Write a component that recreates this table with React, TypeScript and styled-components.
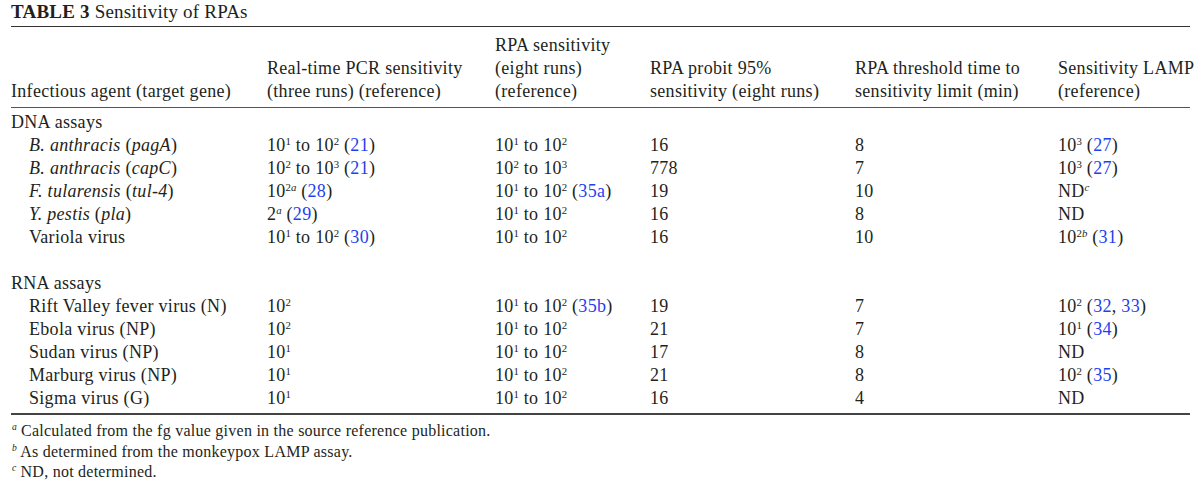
import React from 'react'
import { styled, createGlobalStyle } from 'styled-components'

const Global = createGlobalStyle`
  body {
    margin: 0;
    background: #fff;
    color: #231f20;
    font-family: "Liberation Serif", "Times New Roman", serif;
  }
`

const Page = styled.div`
  width: 1179px;
  padding: 2px 0 0 11px;
`

const TitleBar = styled.div`
  display: flex;
  align-items: baseline;
  gap: 5px;
  height: 20px;
  padding-bottom: 4px;
  border-bottom: 1.5px solid #333;
`

const TitleLabel = styled.span`
  font-size: 19px;
  line-height: 20px;
  font-weight: 700;
  letter-spacing: 0.2px;
`

const TitleText = styled.span`
  font-size: 19px;
  line-height: 20px;
  letter-spacing: 0.2px;
`

const Table = styled.table`
  width: 100%;
  table-layout: fixed;
  border-collapse: collapse;
  font-size: 18px;
  letter-spacing: 0.3px;
  line-height: 23px;
  border-bottom: 2.5px solid #444;

  tbody tr:last-child td {
    padding-bottom: 3px;
  }
`

const Th = styled.th<{ $w: number }>`
  width: ${(p) => p.$w}px;
  text-align: left;
  font-weight: 400;
  vertical-align: bottom;
  padding: 7px 0 4px;
  border-bottom: 1.5px solid #555;
  white-space: nowrap;
`

const Td = styled.td<{ $indent?: boolean; $top?: boolean }>`
  padding: ${(p) => (p.$top ? '3px' : '0')} 0 0 ${(p) => (p.$indent ? '18px' : '0')};
  height: 23px;
  vertical-align: middle;
  white-space: nowrap;
`

const Sup = styled.sup<{ $it?: boolean }>`
  font-size: 0.6em;
  line-height: 0;
  vertical-align: 0.6em;
  letter-spacing: 0;
  font-style: ${(p) => (p.$it ? 'italic' : 'normal')};
`

const Ref = styled.span`
  color: #1f3ff0;
`

const Notes = styled.div`
  font-size: 16px;
  letter-spacing: 0.25px;
  line-height: 20.5px;
  padding-top: 6px;
`

const Note = styled.div`
  padding-left: 1px;
`

const P = ({ e }: { e: string }) => <>10<Sup>{e}</Sup></>
const R = ({ n }: { n: React.ReactNode }) => <>(<Ref>{n}</Ref>)</>
const Range = ({ a, b }: { a: string; b: string }) => <><P e={a} /> to <P e={b} /></>

type Row = { agent: React.ReactNode; pcr: React.ReactNode; rpa: React.ReactNode; probit: string; time: string; lamp: React.ReactNode }

const dna: Row[] = [
  { agent: <><i>B. anthracis</i> (<i>pagA</i>)</>, pcr: <><Range a="1" b="2" /> <R n="21" /></>, rpa: <Range a="1" b="2" />, probit: '16', time: '8', lamp: <><P e="3" /> <R n="27" /></> },
  { agent: <><i>B. anthracis</i> (<i>capC</i>)</>, pcr: <><Range a="2" b="3" /> <R n="21" /></>, rpa: <Range a="2" b="3" />, probit: '778', time: '7', lamp: <><P e="3" /> <R n="27" /></> },
  { agent: <><i>F. tularensis</i> (<i>tul-4</i>)</>, pcr: <>10<Sup>2<i>a</i></Sup> <R n="28" /></>, rpa: <><Range a="1" b="2" /> <R n="35a" /></>, probit: '19', time: '10', lamp: <>ND<Sup $it>c</Sup></> },
  { agent: <><i>Y. pestis</i> (<i>pla</i>)</>, pcr: <>2<Sup $it>a</Sup> <R n="29" /></>, rpa: <Range a="1" b="2" />, probit: '16', time: '8', lamp: 'ND' },
  { agent: 'Variola virus', pcr: <><Range a="1" b="2" /> <R n="30" /></>, rpa: <Range a="1" b="2" />, probit: '16', time: '10', lamp: <>10<Sup>2<i>b</i></Sup> <R n="31" /></> },
]

const rna: Row[] = [
  { agent: 'Rift Valley fever virus (N)', pcr: <P e="2" />, rpa: <><Range a="1" b="2" /> <R n="35b" /></>, probit: '19', time: '7', lamp: <><P e="2" /> (<Ref>32</Ref>, <Ref>33</Ref>)</> },
  { agent: 'Ebola virus (NP)', pcr: <P e="2" />, rpa: <Range a="1" b="2" />, probit: '21', time: '7', lamp: <><P e="1" /> <R n="34" /></> },
  { agent: 'Sudan virus (NP)', pcr: <P e="1" />, rpa: <Range a="1" b="2" />, probit: '17', time: '8', lamp: 'ND' },
  { agent: 'Marburg virus (NP)', pcr: <P e="1" />, rpa: <Range a="1" b="2" />, probit: '21', time: '8', lamp: <><P e="2" /> <R n="35" /></> },
  { agent: 'Sigma virus (G)', pcr: <P e="1" />, rpa: <Range a="1" b="2" />, probit: '16', time: '4', lamp: 'ND' },
]

const DataRow = ({ r }: { r: Row }) => (
  <tr>
    <Td $indent>{r.agent}</Td>
    <Td>{r.pcr}</Td>
    <Td>{r.rpa}</Td>
    <Td>{r.probit}</Td>
    <Td>{r.time}</Td>
    <Td>{r.lamp}</Td>
  </tr>
)

export default function App() {
  return (
    <Page>
      <Global />
      <TitleBar>
        <TitleLabel>TABLE 3</TitleLabel>
        <TitleText>Sensitivity of RPAs</TitleText>
      </TitleBar>
      <Table>
        <thead>
          <tr>
            <Th $w={256}>Infectious agent (target gene)</Th>
            <Th $w={228}>Real-time PCR sensitivity<br />(three runs) (reference)</Th>
            <Th $w={155}>RPA sensitivity<br />(eight runs)<br />(reference)</Th>
            <Th $w={205}>RPA probit 95%<br />sensitivity (eight runs)</Th>
            <Th $w={203}>RPA threshold time to<br />sensitivity limit (min)</Th>
            <Th $w={132}>Sensitivity LAMP<br />(reference)</Th>
          </tr>
        </thead>
        <tbody>
          <tr><Td $top colSpan={6}>DNA assays</Td></tr>
          {dna.map((r, i) => <DataRow key={i} r={r} />)}
          <tr><Td colSpan={6} /></tr>
          <tr><Td colSpan={6}>RNA assays</Td></tr>
          {rna.map((r, i) => <DataRow key={i} r={r} />)}
        </tbody>
      </Table>
      <Notes>
        <Note><Sup $it>a</Sup> Calculated from the fg value given in the source reference publication.</Note>
        <Note><Sup $it>b</Sup> As determined from the monkeypox LAMP assay.</Note>
        <Note><Sup $it>c</Sup> ND, not determined.</Note>
      </Notes>
    </Page>
  )
}
